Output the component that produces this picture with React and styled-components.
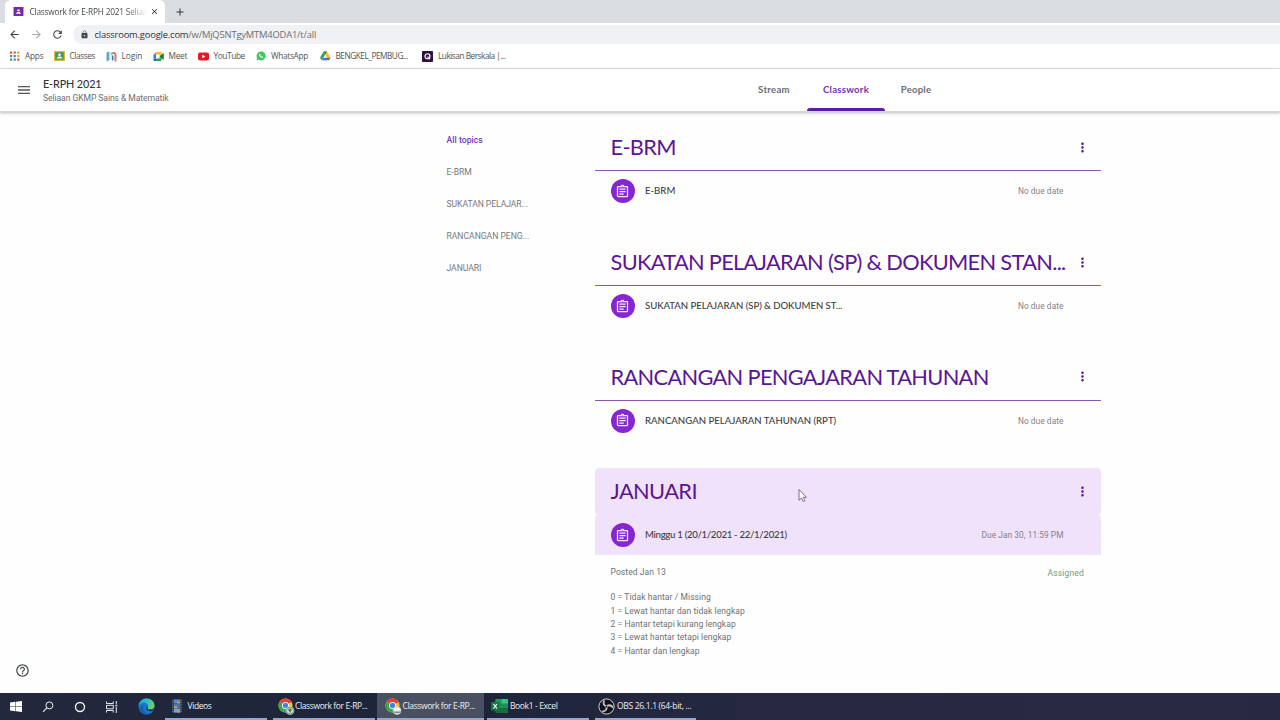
import React from "react";
import styled, { createGlobalStyle } from "styled-components";
import {
  MdAdd,
  MdArrowBack,
  MdArrowForward,
  MdClose,
  MdHelpOutline,
  MdLock,
  MdMenu,
  MdMoreVert,
  MdOutlineAssignment,
  MdRefresh
} from "react-icons/md";

const GlobalStyle = createGlobalStyle`
  * {
    box-sizing: border-box;
  }
  body {
    margin: 0;
    background: #fff;
    overflow: hidden;
  }
  svg {
    display: block;
    flex: none;
  }
`;

const system = '"Open Sans", "Noto Sans", sans-serif';
const product = 'Lato, "Open Sans", sans-serif';
const body = 'Roboto, "Liberation Sans", sans-serif';

const Screen = styled.div`
  display: flex;
  flex-direction: column;
  width: 1280px;
  height: 720px;
  overflow: hidden;
  white-space: nowrap;
  font-family: ${body};
`;

/* browser chrome */

const TabStrip = styled.div`
  display: flex;
  flex: none;
  height: 23px;
  padding-left: 5px;
  background: #dadee2;
`;

const Tab = styled.div`
  display: flex;
  align-items: center;
  width: 160px;
  padding: 0 6px 0 8px;
  border-radius: 6px 6px 0 0;
  background: #fff;
`;

const TabTitle = styled.div`
  flex: 1;
  margin-left: 5.5px;
  font: 8.3px/14px ${system};
  letter-spacing: ${p => p.$spacing}px;
  color: #45494d;
  mask-image: linear-gradient(to right, #000 80%, transparent 98%);
`;

const NewTab = styled.div`
  display: flex;
  align-items: center;
  padding-left: 9px;
  color: #303337;
`;

const Toolbar = styled.div`
  display: flex;
  flex: none;
  align-items: center;
  height: 22px;
  padding: 1px 0 0 8px;
  color: #45494d;
`;

const NavButton = styled.div`
  width: 21.5px;
  color: ${p => (p.$disabled ? "#a9abae" : "#45494d")};
`;

const AddressBar = styled.div`
  display: flex;
  flex: 1;
  align-items: center;
  height: 19px;
  padding-left: 7px;
  border-radius: 10px 0 0 10px;
  background: #f0f1f5;
`;

const Url = styled.div`
  margin-left: 6px;
  font: 9.4px/16px ${system};
  letter-spacing: ${p => p.$spacing}px;
  color: #6b6e73;

  span {
    color: #303337;
  }
`;

const BookmarkBar = styled.div`
  display: flex;
  flex: none;
  height: 24px;
  padding-left: 9px;
  border-bottom: 1px solid #dedfe1;
`;

const Bookmark = styled.div`
  display: flex;
  align-items: center;
  width: ${p => p.$width}px;
  height: 22px;
  gap: ${p => p.$gap || 4.5}px;
  font: 8.3px/14px ${system};
  letter-spacing: ${p => p.$spacing}px;
  color: #505458;
`;

/* classroom header */

const Header = styled.header`
  position: relative;
  display: flex;
  flex: none;
  height: 43px;
  border-bottom: 1px solid #d5d5d7;
  box-shadow: 0 1px 3px rgba(60, 64, 67, 0.35);
  background: #fff;
`;

const MenuButton = styled.div`
  padding: 13px 11px 0 16px;
  color: #55585c;
`;

const Course = styled.div`
  width: 698px;
  padding-top: 8px;
`;

const CourseName = styled.div`
  font: 500 10.8px/14px ${product};
  letter-spacing: ${p => p.$spacing}px;
  color: #303337;
`;

const CourseSection = styled.div`
  font: 8.6px/14px ${body};
  letter-spacing: ${p => p.$spacing}px;
  color: #6b6e73;
`;

const NavTab = styled.div`
  display: flex;
  flex-direction: column;
  align-items: center;
  justify-content: space-between;
  width: ${p => p.$width}px;
  padding-top: 14px;
  font: bold 9.6px/14px ${product};
  letter-spacing: ${p => p.$spacing}px;
  color: ${p => (p.$active ? "#7434b4" : "#6b6e72")};

  &::after {
    content: "";
    align-self: stretch;
    height: 3px;
    border-radius: 3px 3px 0 0;
    background: ${p => (p.$active ? "#6319a8" : "transparent")};
  }
`;

/* page content */

const Page = styled.main`
  display: flex;
  flex: 1;
  min-height: 0;
  overflow: hidden;
  background: #fefefe;
`;

const Help = styled.div`
  align-self: flex-end;
  width: 446.5px;
  padding: 0 0 15px 15px;
  color: #45494d;
`;

const Topics = styled.nav`
  width: 148.5px;
  padding-top: 12px;
`;

const Topic = styled.div`
  height: 32px;
  font: ${p => (p.$active ? 500 : 400)} 8.6px/32px ${body};
  letter-spacing: ${p => p.$spacing}px;
  color: ${p => (p.$active ? "#7a35bd" : "#77797d")};
`;

const Feed = styled.div`
  width: 506px;
  padding-top: 12.4px;
`;

const Section = styled.section`
  margin-bottom: 27.7px;
`;

const SectionHeader = styled.div`
  display: flex;
  align-items: center;
  justify-content: space-between;
  height: 47px;
  padding: 0 11.5px 0 15.5px;
  border-bottom: 1px solid ${p => (p.$open ? "#f0e2fa" : "#8a58b0")};
  border-radius: ${p => (p.$open ? "4px" : "0")};
  background: ${p => (p.$open ? "#f0e2fa" : "transparent")};
  color: #5a1596;
`;

const SectionTitle = styled.h2`
  margin: 0;
  font: 400 21.8px/30px ${product};
  letter-spacing: ${p => p.$spacing}px;
`;

const Item = styled.div`
  display: flex;
  align-items: center;
  height: 40px;
  padding: 0 37.5px 0 15.5px;
  border-radius: 4px 4px 0 0;
  background: ${p => (p.$open ? "#f0e2fa" : "transparent")};
`;

const Badge = styled.div`
  display: flex;
  align-items: center;
  justify-content: center;
  width: 24px;
  height: 24px;
  margin-right: 10.5px;
  border-radius: 50%;
  background: #8626d1;
  color: #f6ecfd;
`;

const ItemTitle = styled.div`
  flex: 1;
  font: 500 9.6px/14px ${product};
  letter-spacing: ${p => p.$spacing}px;
  color: #3f4043;
`;

const DueDate = styled.div`
  font: 8.3px/14px ${body};
  letter-spacing: ${p => p.$spacing}px;
  color: #85818a;
`;

const Details = styled.div`
  padding: 10.5px 17px 0 15.5px;
  font: 8.5px/13.35px ${body};
  letter-spacing: 0.08px;
  color: #6f7175;
`;

const DetailsTop = styled.div`
  display: flex;
  justify-content: space-between;
  margin-bottom: 11px;
`;

const Status = styled.div`
  padding-top: 1px;
  letter-spacing: 0.17px;
  color: #6ba274;
`;

const Cursor = styled.svg`
  position: absolute;
  left: 797px;
  top: 488px;
`;

/* windows taskbar */

const Taskbar = styled.footer`
  display: flex;
  flex: none;
  height: 27px;
  background: linear-gradient(to right, #23283d, #1d2438 35%, #262842 58%, #282941);
`;

const StartIcons = styled.div`
  display: grid;
  grid-template-columns: 32px 32px 32px 32px 36px;
  align-items: center;
  justify-items: center;
  width: 165px;
`;

const Task = styled.div`
  display: flex;
  align-items: center;
  width: ${p => p.$width}px;
  margin-right: ${p => p.$after}px;
  padding: 1px 0 0 ${p => p.$pad}px;
  gap: ${p => p.$gap}px;
  border-bottom: 2px solid #96a6cc;
  background: ${p => (p.$active ? "#495062" : "transparent")};
  font: 500 8.5px/14px ${system};
  letter-spacing: ${p => p.$spacing}px;
  color: #eceef3;
`;

const ClassroomIcon = ({ frame, fill, width = 11, height = 10 }) => (
  <svg width={width} height={height} viewBox="0 0 22 20">
    <rect width="22" height="20" rx="1" fill={frame} />
    <rect x="2.5" y="2.5" width="17" height="15" fill={fill} />
    <circle cx="11" cy="7.4" r="2.6" fill="#fff" />
    <path d="M5.500 15c0-3 3-4 5.500-4s5.500 1 5.500 4z" fill="#fff" />
  </svg>
);

const dotColors = ["#d9534a", "#d9534a", "#e0a23a", "#4a9a5a", "#4a7fd9", "#e0a23a", "#4a9a5a", "#4a7fd9", "#d9534a"];

const AppsIcon = () => (
  <svg width="11" height="10" viewBox="0 0 11 10">
    {dotColors.map((color, i) => (
      <rect key={i} x={1 + (i % 3) * 3.6} y={0.5 + Math.floor(i / 3) * 3.5} width="2.2" height="2.2" fill={color} />
    ))}
  </svg>
);

const LoginIcon = () => (
  <svg width="11" height="11" viewBox="0 0 22 22">
    <path d="M1 3l6-2v17l-6 3z" fill="#5ba8cf" />
    <path d="M7 1l5 3v15l-5-2z" fill="#d9eef7" />
    <path d="M10 4c6-4 11-1 11 4v13h-4V9c0-3-3-4-7-2z" fill="#c9836b" />
    <path d="M12 8l3 2v7l-3 3z" fill="#4278a8" />
  </svg>
);

const MeetIcon = () => (
  <svg width="11" height="11" viewBox="0 0 22 20">
    <path d="M1 6l6-5v5z" fill="#e5483a" />
    <path d="M1 6h5v8H1z" fill="#2f7de1" />
    <path d="M1 14h5v5H2.500A1.500 1.500 0 0 1 1 17.500z" fill="#2366c7" />
    <path d="M7 1h8a2 2 0 0 1 2 2v5l-4 2V6H7z" fill="#f5b91b" />
    <path d="M6 14h7v-3l4 1v5a2 2 0 0 1-2 2H6z" fill="#1fa854" />
    <path d="M13 10l7-6.500c.6-.5 1.500-.2 1.500.6v11.500c0 .8-.9 1.200-1.500.6z" fill="#157a3d" />
  </svg>
);

const YouTubeIcon = () => (
  <svg width="11" height="9" viewBox="0 0 22 18">
    <rect y="1" width="22" height="16" rx="4" fill="#e31b23" />
    <path d="M8.500 5.300v7.400L15 9z" fill="#fff" />
  </svg>
);

const WhatsAppIcon = () => (
  <svg width="10" height="10" viewBox="0 0 20 20">
    <path d="M1 19l1.400-4.700A9 9 0 1 1 5.700 17.700z" fill="#3cc95b" />
    <path d="M7 5.500c-2 1-1.200 3.700.8 5.900s4.500 3.200 6 1.400c.8-1-.1-1.600-1.700-2.200l-1.100 1C9.700 11 8.800 10 8.500 8.900l.8-1C8.600 6 8 5.200 7 5.500z" fill="#fff" />
  </svg>
);

const DriveIcon = () => (
  <svg width="10.5" height="9.5" viewBox="0 0 22 20">
    <path d="M7.500 1L0 14l3.500 5.500L11 7z" fill="#29a35a" />
    <path d="M7.500 1h7L22 14h-7z" fill="#f4bf2a" />
    <path d="M7.300 14H22l-3.500 5.500h-15z" fill="#3f78dc" />
    <path d="M7.500 1h7L11 7z" fill="#188043" />
    <path d="M15 14h7l-3.500 5.500z" fill="#dd4b3e" />
  </svg>
);

const BerskalaIcon = () => (
  <svg width="11" height="11" viewBox="0 0 22 22">
    <rect width="22" height="22" rx="1.5" fill="#30103c" />
    <circle cx="11" cy="10.5" r="5" fill="none" stroke="#fff" strokeWidth="2.4" />
    <path d="M11 11l5 5.500" stroke="#fff" strokeWidth="2.2" />
  </svg>
);

const WindowsIcon = () => (
  <svg width="12" height="11" viewBox="0 0 24 22" fill="#fff">
    <path d="M0 3l10.500-1.500v9H0zM11.500 1.400L24 0v10.500H11.500zM0 11.500h10.500v9L0 19zM11.500 11.500H24V22l-12.500-1.600z" />
  </svg>
);

const SearchIcon = () => (
  <svg width="12" height="12" viewBox="0 0 12 12" fill="none" stroke="#eceef3">
    <circle cx="7.4" cy="4.4" r="3.5" strokeWidth="1" />
    <path d="M4.900 6.900L1 10.900" strokeWidth="1.1" />
  </svg>
);

const CortanaIcon = () => (
  <svg width="12" height="12" viewBox="0 0 12 12">
    <circle cx="6" cy="6" r="4.5" fill="none" stroke="#f2f3f6" strokeWidth="1.4" />
  </svg>
);

const TaskViewIcon = () => (
  <svg width="12" height="12" viewBox="0 0 12 12" fill="none" stroke="#e6e8ee">
    <path d="M.5.5v2h6.800v-2M.5 11.500v-2h6.800v2M.5 4.300h6.800v3.500H.5zM10.300 0v3M10.300 6v6" />
    <path d="M9.300 4.500h2" strokeWidth="1.5" />
  </svg>
);

const EdgeIcon = () => (
  <svg width="17" height="17" viewBox="0 0 34 34">
    <defs>
      <linearGradient id="edge-top" x1="0" y1="0" x2="1" y2="0.4">
        <stop offset="0" stopColor="#2297dc" />
        <stop offset="0.55" stopColor="#2cc1c7" />
        <stop offset="1" stopColor="#67d35e" />
      </linearGradient>
    </defs>
    <circle cx="17" cy="17" r="16" fill="#1478cb" />
    <path d="M1 16C2 6 9 1 17 1c10 0 16 7 16 14 0 5-4 8-9 8-4 0-6-2-5-4 1-1 2-2 1-5-1-3-4-5-8-5-5 0-9 3-11 7z" fill="url(#edge-top)" />
    <path d="M12 15c-4 7 1 16 10 17-8 3-17-1-19-9 0-6 4-9 9-8z" fill="#1660ae" />
    <path d="M19 19c-1 2 1 4 5 4 3 0 6-1 8-3-1 3-2 5-4 6-5 1-9-1-11-4-1-2 0-4 2-5z" fill="#202941" />
  </svg>
);

const VideosIcon = () => (
  <svg width="10" height="14" viewBox="0 0 10 14">
    <rect width="10" height="14" fill="#343943" />
    <rect x="2" y="0.5" width="6" height="4" fill="#5489cf" />
    <rect x="2" y="5" width="6" height="4" fill="#4a71b5" />
    <rect x="2" y="9.5" width="6" height="4" fill="#6fa3dc" />
    <path d="M5 2.500h3v2H5zM2 7h3v2H2zM5 11.500h3v2H5z" fill="#c79b52" />
    <path d="M1 1v12M9 1v12" stroke="#8a8f98" strokeDasharray="1 1.2" />
  </svg>
);

const ChromeIcon = ({ badge }) => (
  <svg width="17" height="17" viewBox="0 0 34 34">
    <circle cx="15" cy="15" r="14" fill="#f2c230" />
    <path d="M15 15L2.900 8A14 14 0 0 1 27.100 8z" fill="#df4437" />
    <path d="M15 1a14 14 0 0 1 12.100 7H15z" fill="#df4437" />
    <path d="M2.900 8A14 14 0 0 0 15 29l6-10.500-6-3.500z" fill="#35a556" />
    <circle cx="15" cy="15" r="7" fill="#fff" />
    <circle cx="15" cy="15" r="5.3" fill="#4384ea" />
    {badge === "crest" ? (
      <g>
        <circle cx="24" cy="25" r="8.5" fill="#e8eddb" />
        <circle cx="24" cy="25" r="6.8" fill="none" stroke="#357c5e" strokeWidth="1.5" />
        <path d="M21 21h6v4l-3 5-3-5z" fill="#244e51" />
        <path d="M24 20v8" stroke="#e5bd41" strokeWidth="1.5" />
      </g>
    ) : (
      <g>
        <circle cx="24" cy="25" r="8.5" fill="#d8d9d8" />
        <path d="M17 24c1-6 13-6 14 0z" fill="#f7f7f5" />
        <path d="M16 26h16l-3 4H19z" fill="#85898b" />
        <path d="M18 26h12" stroke="#fff" strokeWidth="1.5" />
      </g>
    )}
  </svg>
);

const ExcelIcon = () => (
  <svg width="17" height="14" viewBox="0 0 34 28">
    <rect x="9" width="25" height="28" rx="2" fill="#1e8f52" />
    <path d="M9 0h12v9H9z" fill="#219957" />
    <path d="M21 0h11a2 2 0 0 1 2 2v7H21z" fill="#34c481" />
    <path d="M9 18h25v8a2 2 0 0 1-2 2H11a2 2 0 0 1-2-2z" fill="#176b3c" />
    <rect y="6" width="17" height="17" rx="1.5" fill="#117a43" />
    <path d="M5 10l7 9M12 10l-7 9" stroke="#fff" strokeWidth="2.4" />
  </svg>
);

const ObsIcon = () => (
  <svg width="17" height="17" viewBox="0 0 34 34">
    <circle cx="17" cy="17" r="15.2" fill="#121116" stroke="#e5e5e8" strokeWidth="1.8" />
    {[0, 120, 240].map(angle => (
      <path
        key={angle}
        transform={`rotate(${angle} 17 17)`}
        d="M17.500 16.500c-5 0-8-5-5.500-10.500"
        fill="none"
        stroke="#c9c9cf"
        strokeWidth="3.6"
        strokeLinecap="round"
      />
    ))}
    <circle cx="17" cy="17" r="2" fill="#121116" />
  </svg>
);

const bookmarks = [
  { label: "Apps", icon: <AppsIcon />, width: 45, spacing: -0.25, gap: 5 },
  { label: "Classes", icon: <ClassroomIcon frame="#d6b845" fill="#4a9658" />, width: 52, spacing: -0.42 },
  { label: "Login", icon: <LoginIcon />, width: 47, spacing: -0.05 },
  { label: "Meet", icon: <MeetIcon />, width: 45, spacing: -0.25 },
  { label: "YouTube", icon: <YouTubeIcon />, width: 58, spacing: -0.4 },
  { label: "WhatsApp", icon: <WhatsAppIcon />, width: 64, spacing: -0.35, gap: 5 },
  { label: "BENGKEL_PEMBUG...", icon: <DriveIcon />, width: 102, spacing: -0.5, gap: 5 },
  { label: "Lukisan Berskala |...", icon: <BerskalaIcon />, width: 100, spacing: -0.5, gap: 5 }
];

const navTabs = [
  { label: "Stream", width: 66, spacing: 0.3 },
  { label: "Classwork", width: 78, spacing: 0.25, active: true },
  { label: "People", width: 62, spacing: 0.2 }
];

const topics = [
  { label: "All topics", spacing: 0.05, active: true },
  { label: "E-BRM", spacing: -0.05 },
  { label: "SUKATAN PELAJAR...", spacing: -0.06 },
  { label: "RANCANGAN PENG...", spacing: -0.02 },
  { label: "JANUARI", spacing: -0.05 }
];

const sections = [
  { title: "E-BRM", spacing: -0.7, item: "E-BRM", itemSpacing: 0, due: "No due date" },
  {
    title: "SUKATAN PELAJARAN (SP) & DOKUMEN STAN...",
    spacing: -0.69,
    item: "SUKATAN PELAJARAN (SP) & DOKUMEN ST...",
    itemSpacing: -0.05,
    due: "No due date"
  },
  {
    title: "RANCANGAN PENGAJARAN TAHUNAN",
    spacing: -0.68,
    item: "RANCANGAN PELAJARAN TAHUNAN (RPT)",
    itemSpacing: 0,
    due: "No due date"
  },
  {
    title: "JANUARI",
    spacing: -0.6,
    item: "Minggu 1 (20/1/2021 - 22/1/2021)",
    itemSpacing: -0.3,
    due: "Due Jan 30, 11:59 PM",
    open: true
  }
];

const scale = [
  "0 = Tidak hantar / Missing",
  "1 = Lewat hantar dan tidak lengkap",
  "2 = Hantar tetapi kurang lengkap",
  "3 = Lewat hantar tetapi lengkap",
  "4 = Hantar dan lengkap"
];

const tasks = [
  { label: "Videos", icon: <VideosIcon />, width: 102, after: 6, pad: 7, gap: 5.5, spacing: -0.4 },
  { label: "Classwork for E-RP...", icon: <ChromeIcon badge="crest" />, width: 102, after: 2, pad: 4.5, gap: 0.5, spacing: -0.38 },
  { label: "Classwork for E-RP...", icon: <ChromeIcon badge="photo" />, width: 107, after: 3, pad: 8, gap: 0.5, spacing: -0.38, active: true },
  { label: "Book1 - Excel", icon: <ExcelIcon />, width: 102, after: 6, pad: 4, gap: 2, spacing: -0.38 },
  { label: "OBS 26.1.1 (64-bit, ...", icon: <ObsIcon />, width: 101, after: 0, pad: 3, gap: 2, spacing: -0.32 }
];

const Browser = () => (
  <>
    <TabStrip>
      <Tab>
        <ClassroomIcon frame="#7427b8" fill="#7427b8" height={9} />
        <TabTitle $spacing={-0.2}>Classwork for E-RPH 2021 Seliaa</TabTitle>
        <MdClose size={9} color="#303337" />
      </Tab>
      <NewTab>
        <MdAdd size={12} />
      </NewTab>
    </TabStrip>
    <Toolbar>
      <NavButton>
        <MdArrowBack size={13} />
      </NavButton>
      <NavButton $disabled>
        <MdArrowForward size={13} />
      </NavButton>
      <NavButton>
        <MdRefresh size={13} />
      </NavButton>
      <AddressBar>
        <MdLock size={9} />
        <Url $spacing={-0.19}>
          <span>classroom.google.com</span>/w/MjQ5NTgyMTM4ODA1/t/all
        </Url>
      </AddressBar>
    </Toolbar>
    <BookmarkBar>
      {bookmarks.map(({ label, icon, width, spacing, gap }) => (
        <Bookmark key={label} $width={width} $spacing={spacing} $gap={gap}>
          {icon}
          {label}
        </Bookmark>
      ))}
    </BookmarkBar>
  </>
);

const ClassHeader = () => (
  <Header>
    <MenuButton>
      <MdMenu size={16} />
    </MenuButton>
    <Course>
      <CourseName $spacing={-0.12}>E-RPH 2021</CourseName>
      <CourseSection $spacing={-0.08}>Seliaan GKMP Sains &amp; Matematik</CourseSection>
    </Course>
    {navTabs.map(({ label, width, spacing, active }) => (
      <NavTab key={label} $width={width} $spacing={spacing} $active={active}>
        {label}
      </NavTab>
    ))}
  </Header>
);

const Classwork = () => (
  <Page>
    <Help>
      <MdHelpOutline size={15} />
    </Help>
    <Topics>
      {topics.map(({ label, spacing, active }) => (
        <Topic key={label} $spacing={spacing} $active={active}>
          {label}
        </Topic>
      ))}
    </Topics>
    <Feed>
      {sections.map(({ title, spacing, item, itemSpacing, due, open }) => (
        <Section key={title}>
          <SectionHeader $open={open}>
            <SectionTitle $spacing={spacing}>{title}</SectionTitle>
            <MdMoreVert size={15} />
          </SectionHeader>
          <Item $open={open}>
            <Badge>
              <MdOutlineAssignment size={15} />
            </Badge>
            <ItemTitle $spacing={itemSpacing}>{item}</ItemTitle>
            <DueDate $spacing={0.08}>{due}</DueDate>
          </Item>
          {open && (
            <Details>
              <DetailsTop>
                Posted Jan 13
                <Status>Assigned</Status>
              </DetailsTop>
              {scale.map(line => (
                <div key={line}>{line}</div>
              ))}
            </Details>
          )}
        </Section>
      ))}
    </Feed>
  </Page>
);

const App = () => (
  <>
    <GlobalStyle />
    <Screen>
      <Browser />
      <ClassHeader />
      <Classwork />
      <Taskbar>
        <StartIcons>
          <WindowsIcon />
          <SearchIcon />
          <CortanaIcon />
          <TaskViewIcon />
          <EdgeIcon />
        </StartIcons>
        {tasks.map(({ label, icon, width, after, pad, gap, spacing, active }, i) => (
          <Task key={i} $width={width} $after={after} $pad={pad} $gap={gap} $spacing={spacing} $active={active}>
            {icon}
            {label}
          </Task>
        ))}
      </Taskbar>
    </Screen>
    <Cursor width="10" height="15" viewBox="0 0 10 15">
      <path d="M2 1.500v10.800l2.500-2.300 1.700 3.500 1.700-.8-1.600-3.400h3.100z" fill="#fff" stroke="#6c6175" strokeWidth="0.9" />
    </Cursor>
  </>
);

export default App;
